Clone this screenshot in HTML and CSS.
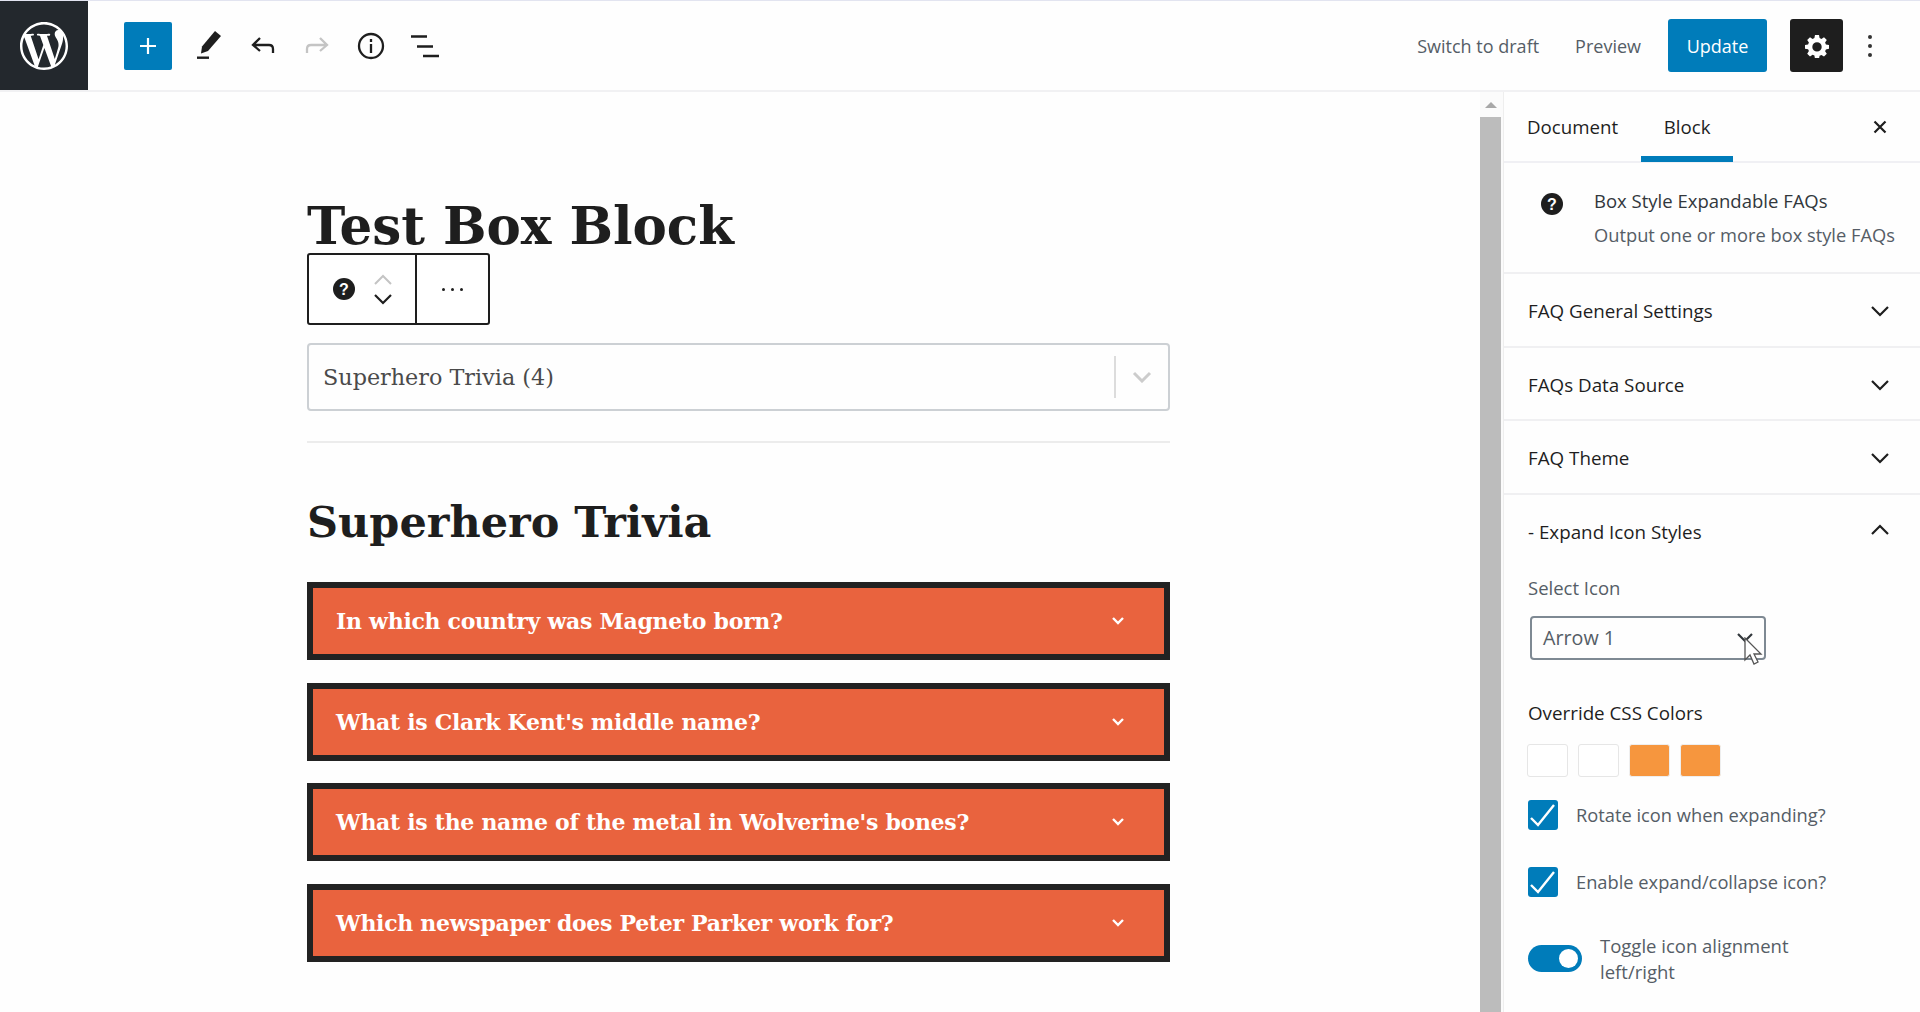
FILE: index.html
```html
<!DOCTYPE html>
<html lang="en">
<head>
    <meta charset="UTF-8">
    <meta name="viewport" content="width=device-width, initial-scale=1.0">
    <title>Test Box Block</title>
    <link rel="stylesheet" href="styles.css">
</head>
<body>
    <header class="topbar">
        <div class="wp-logo">
            <svg width="48" height="48" viewBox="0 0 24 24" fill="#fff"><path d="M21.469 6.825c.84 1.537 1.318 3.3 1.318 5.175 0 3.979-2.156 7.456-5.363 9.325l3.295-9.527c.615-1.54.82-2.771.82-3.864 0-.405-.026-.78-.07-1.11m-7.981.105c.647-.03 1.232-.105 1.232-.105.582-.075.514-.93-.067-.899 0 0-1.755.135-2.88.135-1.064 0-2.85-.15-2.85-.15-.585-.03-.661.855-.075.885 0 0 .54.061 1.125.09l1.68 4.605-2.37 7.08L5.354 6.9c.649-.03 1.234-.1 1.234-.1.585-.075.516-.93-.065-.896 0 0-1.746.138-2.874.138-.2 0-.438-.008-.69-.015C4.911 3.15 8.235 1.215 12 1.215c2.809 0 5.365 1.072 7.286 2.833-.046-.003-.091-.009-.141-.009-1.06 0-1.812.923-1.812 1.914 0 .89.513 1.643 1.06 2.531.411.72.89 1.643.89 2.977 0 .915-.354 1.994-.821 3.479l-1.075 3.585-3.9-11.61.001.014zM12 22.784c-1.059 0-2.081-.153-3.048-.437l3.237-9.406 3.315 9.087c.024.053.05.101.078.149-1.12.393-2.325.609-3.582.609M1.211 12c0-1.564.336-3.05.935-4.39L7.29 21.709C3.694 19.96 1.212 16.271 1.211 12M12 0C5.385 0 0 5.385 0 12s5.385 12 12 12 12-5.385 12-12S18.615 0 12 0"/></svg>
        </div>
        <div class="tools">
            <button class="add-btn">
                <svg width="24" height="24" viewBox="0 0 24 24" fill="none" stroke="#fff" stroke-width="2.2"><path d="M12 4v16M4 12h16"/></svg>
            </button>
            <span class="tool">
                <svg width="30" height="32" viewBox="0 0 30 32" fill="#1e1e1e"><path d="M21 1l6 5-13 15-7 2.500 1-7z"/><rect x="3" y="26.500" width="12" height="2.400"/></svg>
            </span>
            <span class="tool">
                <svg width="30" height="30" viewBox="0 0 30 30" fill="none" stroke="#1e1e1e" stroke-width="2.3"><path d="M12 7l-7 7 7 6M5 14h16c3 0 4 2 4 4v4"/></svg>
            </span>
            <span class="tool">
                <svg width="30" height="30" viewBox="0 0 30 30" fill="none" stroke="#c4c4c4" stroke-width="2.3"><path d="M18 7l7 7-7 6M25 14H9c-3 0-4 2-4 4v4"/></svg>
            </span>
            <span class="tool">
                <svg width="28" height="28" viewBox="0 0 28 28" fill="none" stroke="#1e1e1e" stroke-width="2.3"><circle cx="14" cy="14" r="12"/><path d="M14 12v9"/><path d="M14 7v3"/></svg>
            </span>
            <span class="tool">
                <svg width="30" height="24" viewBox="0 0 30 24" fill="none" stroke="#1e1e1e" stroke-width="2.3"><path d="M1 2.500h16M7 12.500h16M13 22h16"/></svg>
            </span>
        </div>
        <div class="actions">
            <a class="link-btn draft">Switch to draft</a>
            <a class="link-btn preview">Preview</a>
            <button class="update-btn">Update</button>
            <button class="gear-btn">
                <svg width="24" height="24" viewBox="0 0 24 24" fill="#fff"><path fill-rule="evenodd" d="M10 1h4l.6 3.100 1.800.8L19 3.200 21.800 6l-1.700 2.600.8 1.800L24 11v3.800l-3.100.6-.8 1.800 1.700 2.600-2.800 2.800-2.600-1.700-1.800.8-.6 3H10l-.6-3.100-1.800-.8L5 22.500 2.200 19.700l1.700-2.600-.8-1.800L0 14.800V11l3.100-.6.8-1.800L2.200 6 5 3.200l2.600 1.700 1.800-.8zM12 8.200a4.700 4.700 0 1 0 0 9.400 4.700 4.700 0 0 0 0-9.400z"/></svg>
            </button>
            <span class="more-dots"><i></i><i></i><i></i></span>
        </div>
    </header>

    <div class="layout">
        <main class="editor">
            <h1 class="post-title">Test Box Block</h1>
            <div class="block-toolbar">
                <div class="toolbar-group first">
                    <svg class="help-icon" width="22" height="22" viewBox="0 0 22 22"><circle cx="11" cy="11" r="11" fill="#1e1e1e"/><text x="11" y="16.500" class="help-mark">?</text></svg>
                    <div class="movers">
                        <svg width="22" height="12" viewBox="0 0 22 12" fill="none" stroke="#c4c4c4" stroke-width="2"><path d="M3 10l8-8 8 8"/></svg>
                        <svg width="22" height="12" viewBox="0 0 22 12" fill="none" stroke="#1e1e1e" stroke-width="2.200"><path d="M3 2l8 8 8-8"/></svg>
                    </div>
                </div>
                <div class="toolbar-group second"><span class="dots"><i></i><i></i><i></i></span></div>
            </div>
            <div class="faq-select">
                <span class="faq-select-value">Superhero Trivia (4)</span>
                <span class="faq-select-arrow">
                    <svg width="20" height="12" viewBox="0 0 20 12" fill="none" stroke="#cccccc" stroke-width="3"><path d="M2 2l8 8 8-8"/></svg>
                </span>
            </div>
            <hr class="divider">
            <h2 class="faq-title">Superhero Trivia</h2>
            <div class="faq-list">
                <div class="faq-item"><span>In which country was Magneto born?</span><svg width="14" height="10" viewBox="0 0 14 10" fill="none" stroke="#fff" stroke-width="2.400"><path d="M2 2l5 5 5-5"/></svg></div>
                <div class="faq-item"><span>What is Clark Kent's middle name?</span><svg width="14" height="10" viewBox="0 0 14 10" fill="none" stroke="#fff" stroke-width="2.400"><path d="M2 2l5 5 5-5"/></svg></div>
                <div class="faq-item"><span>What is the name of the metal in Wolverine's bones?</span><svg width="14" height="10" viewBox="0 0 14 10" fill="none" stroke="#fff" stroke-width="2.400"><path d="M2 2l5 5 5-5"/></svg></div>
                <div class="faq-item"><span>Which newspaper does Peter Parker work for?</span><svg width="14" height="10" viewBox="0 0 14 10" fill="none" stroke="#fff" stroke-width="2.400"><path d="M2 2l5 5 5-5"/></svg></div>
            </div>
        </main>

        <div class="scrollbar">
            <div class="scroll-arrow"></div>
            <div class="scroll-thumb"></div>
        </div>

        <aside class="sidebar">
            <div class="tabs">
                <span class="tab">Document</span>
                <span class="tab active">Block</span>
                <svg class="tab-close" width="16" height="16" viewBox="0 0 16 16" fill="none" stroke="#1e1e1e" stroke-width="2.200"><path d="M2.500 2.500l11 11M13.500 2.500l-11 11"/></svg>
            </div>
            <div class="block-card">
                <svg class="help-icon" width="22" height="22" viewBox="0 0 22 22"><circle cx="11" cy="11" r="11" fill="#1e1e1e"/><text x="11" y="16.500" class="help-mark">?</text></svg>
                <div>
                    <div class="block-card-title">Box Style Expandable FAQs</div>
                    <div class="block-card-desc">Output one or more box style FAQs</div>
                </div>
            </div>
            <div class="panel-row"><span>FAQ General Settings</span><svg width="20" height="12" viewBox="0 0 20 12" fill="none" stroke="#1e1e1e" stroke-width="2.200"><path d="M2 2l8 8 8-8"/></svg></div>
            <div class="panel-row"><span>FAQs Data Source</span><svg width="20" height="12" viewBox="0 0 20 12" fill="none" stroke="#1e1e1e" stroke-width="2.200"><path d="M2 2l8 8 8-8"/></svg></div>
            <div class="panel-row"><span>FAQ Theme</span><svg width="20" height="12" viewBox="0 0 20 12" fill="none" stroke="#1e1e1e" stroke-width="2.200"><path d="M2 2l8 8 8-8"/></svg></div>
            <div class="panel-row open"><span>- Expand Icon Styles</span><svg width="20" height="12" viewBox="0 0 20 12" fill="none" stroke="#1e1e1e" stroke-width="2.200"><path d="M2 10l8-8 8 8"/></svg></div>
            <div class="panel-body">
                <label class="field-label">Select Icon</label>
                <div class="icon-select">
                    <span>Arrow 1</span>
                    <svg width="18" height="12" viewBox="0 0 18 12" fill="none" stroke="#32373c" stroke-width="2.200"><path d="M2 2l7 7 7-7"/></svg>
                    <svg class="cursor" width="22" height="30" viewBox="0 0 22 30" fill="#fff" stroke="#555" stroke-width="1.300"><path d="M2 1v22l5-5 4 9 4-2-4-8h7z"/></svg>
                </div>
                <div class="colors-title">Override CSS Colors</div>
                <div class="swatches">
                    <span class="swatch"></span>
                    <span class="swatch"></span>
                    <span class="swatch orange"></span>
                    <span class="swatch orange"></span>
                </div>
                <div class="check-row">
                    <span class="checkbox"><svg width="30" height="30" viewBox="0 0 30 30" fill="none" stroke="#fff" stroke-width="2.400"><path d="M3 18l7 7L26 5"/></svg></span>
                    <span>Rotate icon when expanding?</span>
                </div>
                <div class="check-row">
                    <span class="checkbox"><svg width="30" height="30" viewBox="0 0 30 30" fill="none" stroke="#fff" stroke-width="2.400"><path d="M3 18l7 7L26 5"/></svg></span>
                    <span>Enable expand/collapse icon?</span>
                </div>
                <div class="toggle-row">
                    <span class="toggle"><i></i></span>
                    <span class="toggle-label">Toggle icon alignment left/right</span>
                </div>
            </div>
        </aside>
    </div>
</body>
</html>
```

FILE: styles.css
```css
* {
    margin: 0;
    padding: 0;
    box-sizing: border-box;
}
html, body {
    height: 1012px;
    overflow: hidden;
}
body {
    font-family: 'Open Sans', 'Noto Sans', sans-serif;
    background: #fefefe;
    color: #1e1e1e;
}
button {
    border: none;
    font-family: inherit;
}

/* top bar */
.topbar {
    height: 92px;
    display: flex;
    align-items: center;
    border-top: 1px solid #e2e4f0;
    border-bottom: 2px solid #f1f1f3;
}
.wp-logo {
    width: 88px;
    height: 89px;
    background: #23282d;
    display: flex;
    justify-content: center;
    align-items: center;
}
.tools {
    display: flex;
    align-items: center;
    margin-left: 36px;
}
.add-btn {
    width: 48px;
    height: 48px;
    background: #007cba;
    border-radius: 2px;
    display: flex;
    justify-content: center;
    align-items: center;
    margin-right: 10px;
}
.tool {
    width: 54px;
    height: 48px;
    display: flex;
    justify-content: center;
    align-items: center;
}
.actions {
    margin-left: auto;
    display: flex;
    align-items: center;
}
.link-btn {
    font-size: 18px;
    color: #555d66;
}
.draft {
    margin-right: 36px;
}
.preview {
    margin-right: 27px;
}
.update-btn {
    width: 99px;
    height: 53px;
    background: #007cba;
    color: #fff;
    font-size: 18px;
    border-radius: 3px;
    margin-right: 23px;
}
.gear-btn {
    width: 53px;
    height: 53px;
    background: #1e1e1e;
    border-radius: 3px;
    display: flex;
    justify-content: center;
    align-items: center;
}
.more-dots {
    width: 4px;
    display: flex;
    flex-direction: column;
    gap: 5px;
    margin: 0 48px 0 25px;
}
.more-dots i {
    width: 4px;
    height: 4px;
    border-radius: 50%;
    background: #333;
}

.layout {
    display: flex;
    height: 920px;
}

/* editor column */
.editor {
    width: 1480px;
    padding-left: 307px;
}
.post-title {
    font-family: 'DejaVu Serif', serif;
    font-size: 51.500px;
    font-weight: 700;
    line-height: 64px;
    height: 161px;
    padding-top: 102px;
    white-space: nowrap;
}
.block-toolbar {
    width: 183px;
    height: 72px;
    border: 2px solid #1e1e1e;
    border-radius: 3px;
    display: flex;
    background: #fff;
}
.toolbar-group {
    display: flex;
    align-items: center;
    justify-content: center;
}
.toolbar-group.first {
    width: 108px;
    border-right: 2px solid #1e1e1e;
    gap: 17px;
    padding-left: 3px;
}
.toolbar-group.second {
    flex: 1;
}
.help-mark {
    font-family: 'Liberation Sans', sans-serif;
    font-size: 16px;
    font-weight: 700;
    fill: #fff;
    text-anchor: middle;
}
.movers {
    display: flex;
    flex-direction: column;
    gap: 7px;
}
.dots {
    display: flex;
    gap: 6px;
}
.dots i {
    width: 3px;
    height: 3px;
    border-radius: 50%;
    background: #1e1e1e;
}
.faq-select {
    width: 863px;
    height: 68px;
    margin-top: 18px;
    border: 2px solid #ccd0d4;
    border-radius: 4px;
    display: flex;
    align-items: center;
    padding-left: 14px;
    font-family: 'DejaVu Serif', serif;
    font-size: 22.300px;
    color: #4a4a4a;
}
.faq-select-value {
    flex: 1;
}
.faq-select-arrow {
    width: 54px;
    height: 42px;
    border-left: 2px solid #dcdcdc;
    display: flex;
    justify-content: center;
    align-items: center;
}
.divider {
    width: 863px;
    border: none;
    border-top: 2px solid #ececec;
    margin-top: 30px;
}
.faq-title {
    font-family: 'DejaVu Serif', serif;
    font-size: 43px;
    font-weight: 700;
    line-height: 56px;
    margin-top: 51px;
}
.faq-list {
    width: 863px;
    margin-top: 32px;
    display: flex;
    flex-direction: column;
    gap: 22.500px;
}
.faq-item {
    height: 78px;
    border: 6px solid #222;
    background: #e9633e;
    color: #fff;
    font-family: 'DejaVu Serif', serif;
    font-size: 22px;
    font-weight: 700;
    letter-spacing: -0.3px;
    display: flex;
    justify-content: space-between;
    align-items: center;
    padding: 0 39px 0 23px;
}

/* scrollbar */
.scrollbar {
    width: 23px;
    display: flex;
    flex-direction: column;
    align-items: center;
    padding-right: 2px;
    background: #fbfbfb;
}
.scroll-arrow {
    height: 25px;
    width: 100%;
    display: flex;
    justify-content: center;
    padding-top: 10px;
}
.scroll-arrow::before {
    content: "";
    border-left: 6px solid transparent;
    border-right: 6px solid transparent;
    border-bottom: 6px solid #a8a8a8;
    height: 0;
}
.scroll-thumb {
    flex: 1;
    width: 100%;
    background: #bcbcbc;
}

/* sidebar */
.sidebar {
    flex: 1;
    border-left: 1px solid #eeeeee;
    font-size: 18.500px;
    color: #32373c;
}
.tabs {
    height: 71px;
    display: flex;
    align-items: center;
    border-bottom: 2px solid #f0f0f4;
    padding-left: 3px;
}
.tab {
    height: 70px;
    padding: 0 20px;
    display: flex;
    align-items: center;
    color: #1e1e1e;
    font-size: 18.700px;
}
.tab.active {
    width: 92px;
    justify-content: center;
    margin-left: 3px;
    padding: 6px 0 0;
    border-bottom: 6px solid #007cba;
}
.tab-close {
    margin-left: auto;
    margin-right: 32px;
}
.block-card {
    height: 111px;
    display: flex;
    gap: 31px;
    padding: 23px 0 0 37px;
    border-bottom: 2px solid #f0f0f2;
}
.block-card .help-icon {
    margin-top: 7px;
    flex: none;
}
.block-card-title {
    font-size: 18.500px;
    color: #32373c;
    line-height: 30px;
}
.block-card-desc {
    font-size: 18.300px;
    color: #555d66;
    line-height: 38px;
    white-space: nowrap;
}
.panel-row {
    height: 73.500px;
    display: flex;
    align-items: center;
    justify-content: space-between;
    padding: 3px 30px 0 24px;
    border-bottom: 2px solid #f0f0f2;
    font-size: 18.800px;
    color: #1e1e1e;
}
.panel-row.open {
    border-bottom: none;
    height: 72px;
}
.panel-row.open svg {
    margin-bottom: 4px;
}
.panel-body {
    padding-left: 24px;
}
.field-label {
    display: block;
    font-size: 18.500px;
    color: #555d66;
    line-height: 24px;
    margin-top: 9px;
}
.icon-select {
    width: 236px;
    height: 44px;
    margin: 16px 0 0 2px;
    border: 2px solid #7e8993;
    border-radius: 4px;
    display: flex;
    align-items: center;
    justify-content: space-between;
    padding: 0 10px 0 11px;
    font-size: 19.700px;
    color: #555d66;
    position: relative;
}
.cursor {
    position: absolute;
    left: 211px;
    top: 19px;
}
.colors-title {
    font-size: 18.800px;
    color: #1e1e1e;
    line-height: 24px;
    margin-top: 41px;
}
.swatches {
    display: flex;
    gap: 10px;
    margin: 19px 0 0 -1px;
}
.swatch {
    width: 41px;
    height: 33px;
    border: 1px solid #e6e6e6;
    border-radius: 3px;
    background: #fff;
}
.swatch.orange {
    background: #f6963e;
    border-color: #eeeeee;
}
.check-row {
    display: flex;
    align-items: center;
    gap: 18px;
    font-size: 18.300px;
    color: #555d66;
    margin-top: 23px;
    height: 30px;
}
.check-row + .check-row {
    margin-top: 37px;
}
.checkbox {
    width: 30px;
    height: 30px;
    background: #007cba;
    border-radius: 3px;
    display: block;
    flex: none;
}
.toggle-row {
    display: flex;
    align-items: center;
    gap: 18px;
    margin-top: 36px;
}
.toggle {
    width: 54px;
    height: 27px;
    background: #007cba;
    border-radius: 14px;
    display: flex;
    justify-content: flex-end;
    align-items: center;
    padding-right: 4px;
    flex: none;
}
.toggle i {
    width: 19px;
    height: 19px;
    background: #fff;
    border-radius: 50%;
}
.toggle-label {
    width: 240px;
    font-size: 18.500px;
    line-height: 26px;
    color: #555d66;
}
```
